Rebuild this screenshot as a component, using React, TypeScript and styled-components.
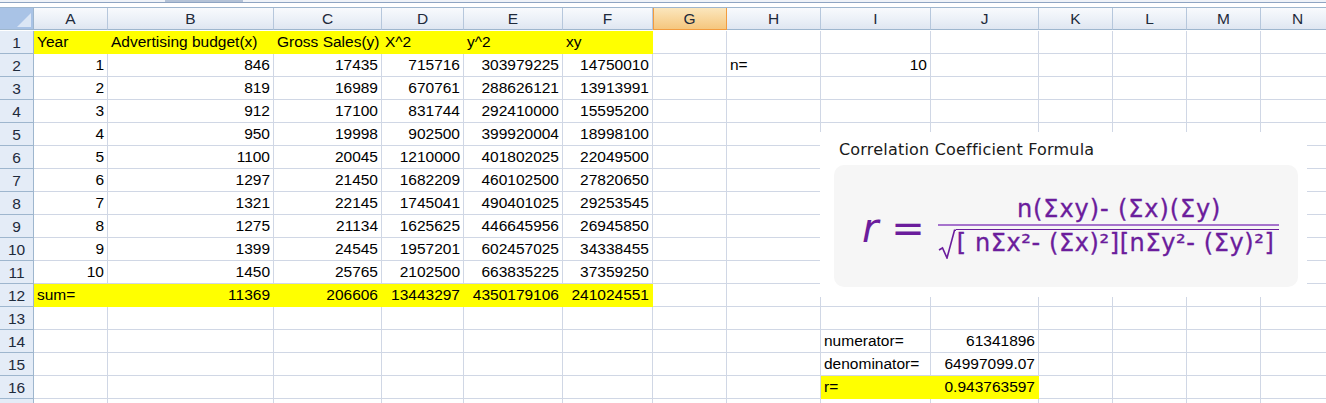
import React from 'react'
import styled, { createGlobalStyle, css } from 'styled-components'

const GlobalStyle = createGlobalStyle`
  html, body { margin: 0; padding: 0; background: #ffffff; }
  body { font-family: "Liberation Sans", Arial, sans-serif; overflow: hidden; }
`

const columns = ['A', 'B', 'C', 'D', 'E', 'F', 'G', 'H', 'I', 'J', 'K', 'L', 'M', 'N']
const widths = [34, 74, 166, 108, 82, 99, 90, 74, 94, 110, 108, 74, 74, 74, 74]

type CellData = { v?: string; right?: boolean; fill?: boolean }

const dataRows = [
  ['1', '846', '17435', '715716', '303979225', '14750010'],
  ['2', '819', '16989', '670761', '288626121', '13913991'],
  ['3', '912', '17100', '831744', '292410000', '15595200'],
  ['4', '950', '19998', '902500', '399920004', '18998100'],
  ['5', '1100', '20045', '1210000', '401802025', '22049500'],
  ['6', '1297', '21450', '1682209', '460102500', '27820650'],
  ['7', '1321', '22145', '1745041', '490401025', '29253545'],
  ['8', '1275', '21134', '1625625', '446645956', '26945850'],
  ['9', '1399', '24545', '1957201', '602457025', '34338455'],
  ['10', '1450', '25765', '2102500', '663835225', '37359250'],
]

const buildRows = (): CellData[][] => {
  const rows: CellData[][] = []
  const blank = (): CellData[] => columns.map(() => ({}))

  const r1 = blank()
  ;['Year', 'Advertising budget(x)', 'Gross Sales(y)', 'X^2', 'y^2', 'xy'].forEach((t, i) => {
    r1[i] = { v: t, fill: true }
  })
  rows.push(r1)

  dataRows.forEach((d, idx) => {
    const r = blank()
    d.forEach((t, i) => (r[i] = { v: t, right: true }))
    if (idx === 0) {
      r[7] = { v: 'n=' }
      r[8] = { v: '10', right: true }
    }
    rows.push(r)
  })

  const r12 = blank()
  r12[0] = { v: 'sum=', fill: true }
  ;['11369', '206606', '13443297', '4350179106', '241024551'].forEach((t, i) => {
    r12[i + 1] = { v: t, right: true, fill: true }
  })
  rows.push(r12)

  rows.push(blank())

  const r14 = blank()
  r14[8] = { v: 'numerator=' }
  r14[9] = { v: '61341896', right: true }
  rows.push(r14)

  const r15 = blank()
  r15[8] = { v: 'denominator=' }
  r15[9] = { v: '64997099.07', right: true }
  rows.push(r15)

  const r16 = blank()
  r16[8] = { v: 'r=', fill: true }
  r16[9] = { v: '0.943763597', right: true, fill: true }
  rows.push(r16)

  // partly visible row 17 at the bottom edge
  rows.push(blank())
  return rows
}

const rows = buildRows()

const App = () => {
  return (
    <Page>
      <GlobalStyle />
      <TopStrip>
        <Tab />
      </TopStrip>
      <Sheet>
        <Corner>
          <CornerTri />
        </Corner>
        {columns.map((c) => (
          <ColHead key={c} $selected={c === 'G'}>{c}</ColHead>
        ))}
        {rows.map((row, ri) => (
          <React.Fragment key={ri}>
            <RowHead>{ri < 16 ? ri + 1 : ''}</RowHead>
            {row.map((cell, ci) => (
              <Cell key={ci} $right={cell.right} $fill={cell.fill}>
                {cell.v}
              </Cell>
            ))}
          </React.Fragment>
        ))}
      </Sheet>

      <FormulaPicture>
        <Title>Correlation Coefficient Formula</Title>
        <FormulaBox>
          <Lhs>
            <Var>r</Var> =
          </Lhs>
          <Fraction>
            <Numerator>n(Σxy)- (Σx)(Σy)</Numerator>
            <Bar />
            <Denominator>
              <Radical viewBox="0 0 18 30" preserveAspectRatio="none">
                <path d="M1 21 L4.5 19 L9 29 L16.5 1.2 L18 1.2" />
              </Radical>
              <Radicand>[ nΣx²- (Σx)²][nΣy²- (Σy)²]</Radicand>
            </Denominator>
          </Fraction>
        </FormulaBox>
      </FormulaPicture>
    </Page>
  )
}

export default App

const purple = '#6b1d9c'

const Page = styled.div`
  position: relative;
  width: 1326px;
  height: 403px;
  overflow: hidden;
  background: #fff;
`

const TopStrip = styled.div`
  height: 2px;
  background: #eef2f8;
  border-bottom: 1px solid #8ea4c2;
  margin-bottom: 4px;
  display: flex;
`

const Tab = styled.div`
  margin-left: 165px;
  width: 78px;
  height: 2px;
  background: #b3c2d7;
`

const Sheet = styled.div`
  display: grid;
  grid-template-columns: ${widths.map((w) => `${w}px`).join(' ')};
  grid-auto-rows: 23px;
  border-top: 1px solid #9eb6ce;
  width: max-content;
`

const headBase = css`
  box-sizing: border-box;
  display: flex;
  align-items: center;
  justify-content: center;
  font-size: 15.5px;
  color: #1e2a3b;
`

const Corner = styled.div`
  ${headBase};
  height: 22px;
  position: relative;
  background: #a9c3e6;
  border-right: 1px solid #9eb6ce;
  border-bottom: 1px solid #9eb6ce;
  overflow: hidden;
`

const CornerTri = styled.div`
  position: absolute;
  right: 2px;
  bottom: 2px;
  width: 0;
  height: 0;
  border-left: 14px solid transparent;
  border-bottom: 14px solid #dbe6f5;
`

const ColHead = styled.div<{ $selected?: boolean }>`
  ${headBase};
  height: 22px;
  padding-top: 1px;
  background: ${({ $selected }) =>
    $selected
      ? 'linear-gradient(#fbe6bd, #f8d59a 55%, #f5c77e)'
      : 'linear-gradient(#f8fafd, #ebf0f7 55%, #dfe6f1)'};
  border-right: 1px solid ${({ $selected }) => ($selected ? '#f29c3f' : '#b6c7dc')};
  border-bottom: 1px solid ${({ $selected }) => ($selected ? '#f29c3f' : '#9eb6ce')};
  ${({ $selected }) => $selected && 'box-shadow: inset 1px 0 0 #f29c3f;'}
`

const RowHead = styled.div`
  ${headBase};
  background: #e4ecf7;
  border-right: 1px solid #9eb6ce;
  border-bottom: 1px solid #9eb6ce;
  padding-top: 1px;
`

const Cell = styled.div<{ $right?: boolean; $fill?: boolean }>`
  box-sizing: border-box;
  display: flex;
  align-items: flex-end;
  justify-content: ${({ $right }) => ($right ? 'flex-end' : 'flex-start')};
  padding: 0 3px 3px 3px;
  font-size: 15.5px;
  line-height: 17px;
  color: #000;
  white-space: nowrap;
  background: ${({ $fill }) => ($fill ? '#ffff00' : '#fff')};
  border-right: 1px solid ${({ $fill }) => ($fill ? '#ffff00' : '#d0d7e5')};
  border-bottom: 1px solid ${({ $fill }) => ($fill ? '#ffff00' : '#d0d7e5')};
`

const FormulaPicture = styled.div`
  position: absolute;
  left: 820px;
  top: 132px;
  width: 487px;
  height: 165px;
  background: #fff;
  box-sizing: border-box;
  padding: 8px 14px 0 14px;
  display: flex;
  flex-direction: column;
`

const Title = styled.div`
  font-family: "DejaVu Sans", sans-serif;
  font-size: 16px;
  letter-spacing: 0.2px;
  color: #1a1a1a;
  padding-left: 5px;
  height: 25px;
`

const FormulaBox = styled.div`
  height: 122px;
  width: 464px;
  background: #f6f6f6;
  border-radius: 10px;
  display: flex;
  align-items: center;
  padding-left: 28px;
  box-sizing: border-box;
  padding-top: 2px;
`

const Lhs = styled.div`
  font-family: "DejaVu Sans", sans-serif;
  font-size: 40px;
  font-weight: 500;
  color: ${purple};
  margin-right: 13px;
  margin-top: 2px;
  white-space: nowrap;
`

const Var = styled.span`
  font-style: italic;
`

const Fraction = styled.div`
  display: flex;
  flex-direction: column;
  align-items: stretch;
  width: 341px;
`

const formulaText = css`
  font-family: "DejaVu Sans", sans-serif;
  font-size: 24px;
  color: ${purple};
  white-space: nowrap;
  -webkit-text-stroke: 0.3px ${purple};
`

const Numerator = styled.div`
  ${formulaText};
  letter-spacing: 0.9px;
  text-align: center;
  padding-left: 22px;
  line-height: 26px;
`

const Bar = styled.div`
  height: 2px;
  background: #a673cc;
  margin: 2px 0 3px 0;
`

const Denominator = styled.div`
  display: flex;
  align-items: stretch;
`

const Radical = styled.svg`
  width: 18px;
  height: 30px;
  flex: none;
  fill: none;
  stroke: ${purple};
  stroke-width: 1.6;
`

const Radicand = styled.div`
  ${formulaText};
  letter-spacing: 0.6px;
  border-top: 1.6px solid ${purple};
  line-height: 27px;
  padding: 0 0 0 1px;
  flex: 1;
`
